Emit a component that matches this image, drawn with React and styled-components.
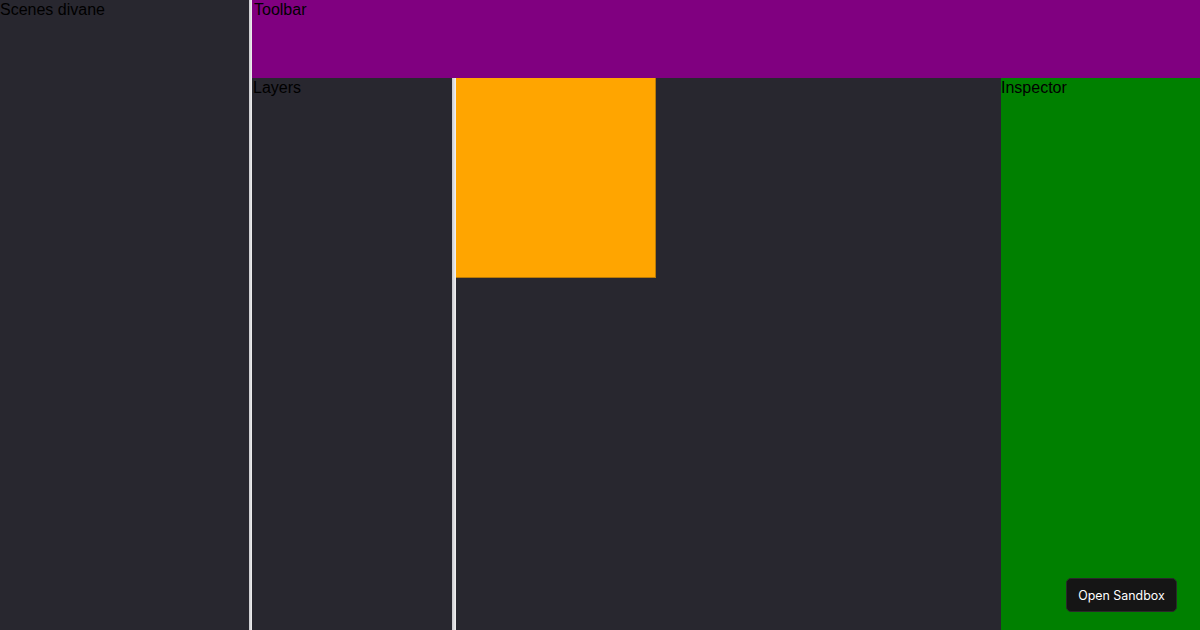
import styled, { createGlobalStyle } from 'styled-components';

const GlobalStyle = createGlobalStyle`
  html, body {
    margin: 0;
    padding: 0;
    height: 100%;
    background: #28272f;
  }
  #root {
    height: 100%;
  }
  * {
    box-sizing: border-box;
  }
`;

const App = () => {
  return (
    <>
      <GlobalStyle />
      <Layout>
        <Panel>Scenes divane</Panel>
        <Splitter />
        <Main>
          <Toolbar>Toolbar</Toolbar>
          <Workspace>
            <Layers>Layers</Layers>
            <Splitter $wide />
            <Canvas>
              <Shape />
            </Canvas>
            <Inspector>Inspector</Inspector>
          </Workspace>
        </Main>
      </Layout>
      <SandboxButton>Open Sandbox</SandboxButton>
    </>
  );
};

export default App;

// Styled Components Area
const Layout = styled.div`
  display: flex;
  height: 100vh;
  font-family: 'Liberation Sans', Arial, sans-serif;
  font-size: 16px;
  line-height: 20px;
  color: #000;
`;

const Panel = styled.div`
  width: 249px;
  flex-shrink: 0;
  background: #28272f;
`;

const Splitter = styled.div`
  width: ${(p) => (p.$wide ? '4px' : '3px')};
  flex-shrink: 0;
  background: linear-gradient(to right, #c8c8cc, #f2f2f2);
`;

const Main = styled.div`
  flex: 1;
  display: flex;
  flex-direction: column;
  min-width: 0;
`;

const Toolbar = styled.div`
  height: 78px;
  flex-shrink: 0;
  background: #800080;
  padding-left: 2px;
`;

const Workspace = styled.div`
  flex: 1;
  display: flex;
  min-height: 0;
`;

const Layers = styled.div`
  width: 200px;
  flex-shrink: 0;
  background: #28272f;
  padding-left: 1px;
`;

const Canvas = styled.div`
  flex: 1;
  background: #28272f;
`;

const Shape = styled.div`
  width: 200px;
  height: 200px;
  background: #ffa500;
  border-right: 1px solid #b87a08;
  border-bottom: 1px solid #b87a08;
`;

const Inspector = styled.div`
  width: 199px;
  flex-shrink: 0;
  background: #008000;
`;

const SandboxButton = styled.button`
  position: fixed;
  right: 23px;
  bottom: 18px;
  width: 111px;
  height: 34px;
  background: #151515;
  color: #fff;
  border: 1px solid #2a2a2a;
  border-radius: 5px;
  font-family: 'Inter', 'Liberation Sans', sans-serif;
  font-size: 12.4px;
  padding: 0;
  cursor: pointer;
`;
